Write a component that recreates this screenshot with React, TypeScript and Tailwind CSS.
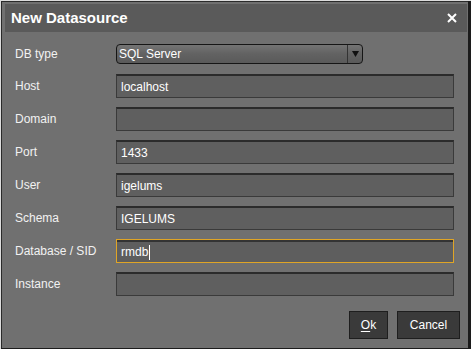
import React from "react";

const font = { fontFamily: '"Liberation Sans", Arial, sans-serif' };

function Field({ value, focused }: { value?: string; focused?: boolean }) {
  if (focused) {
    return (
      <div className="h-[24px] w-[338px] border border-[#e0a526] bg-[#5e5e5e]">
        <div className="flex h-full items-center border-t-2 border-[#333333] pl-[4px] text-[12px] text-white">
          <span>{value}</span>
          <span className="ml-[1px] inline-block h-[15px] w-[1px] bg-white" />
        </div>
      </div>
    );
  }
  return (
    <div className="flex h-[24px] w-[338px] items-center border border-t-2 border-[#3a3a3a] border-t-[#2b2b2b] bg-[#5f5f5f] pl-[4px] text-[12px] text-white">
      {value}
    </div>
  );
}

function Row({ label, children, first }: { label: string; children: React.ReactNode; first?: boolean }) {
  return (
    <div className={`flex items-center ${first ? "h-[20px]" : "h-[24px]"}`}>
      <div className="w-[101px] text-[12px] text-[#f2f2f2]">{label}</div>
      {children}
    </div>
  );
}

export default function App() {
  const rows: [string, string, boolean?][] = [
    ["Host", "localhost"],
    ["Domain", ""],
    ["Port", "1433"],
    ["User", "igelums"],
    ["Schema", "IGELUMS"],
    ["Database / SID", "rmdb", true],
    ["Instance", ""],
  ];
  return (
    <div style={font} className="h-[349px] w-[471px] border-l border-t border-[#dcdcdc] bg-[#1c1c1c]">
      <div className="h-[347px] w-[467px] border-l border-t border-[#2a2a2a] bg-[#707070] pl-[3px] pr-[1px] pt-[2px]">
        <div className="flex h-[28px] w-[462px] items-center justify-between bg-[#5a5a5a] pl-[6px] pr-[10px]">
          <span className="text-[15px] font-bold text-white">New Datasource</span>
          <svg width="10" height="10" viewBox="0 0 10 10">
            <path d="M1 1 L9 9 M9 1 L1 9" stroke="white" strokeWidth="2" />
          </svg>
        </div>
        <div className="pl-[10px] pt-[12px]">
          <Row label="DB type" first>
            <div className="flex h-[20px] w-[247px] items-center rounded-[4px] border border-[#161616] bg-gradient-to-b from-[#747474] via-[#626262] to-[#5a5a5a] text-[12px] text-white">
              <span className="flex-1 pl-[2px]">SQL Server</span>
              <div className="flex h-full w-[15px] items-center justify-center border-l border-[#333333]">
                <svg width="7" height="6" viewBox="0 0 7 6">
                  <path d="M0 0 H7 L3.5 6 Z" fill="#111" />
                </svg>
              </div>
            </div>
          </Row>
          <div className="mt-[10px] flex flex-col gap-[9px]">
            {rows.map(([l, v, f]) => (
              <Row key={l} label={l}>
                <Field value={v} focused={f} />
              </Row>
            ))}
          </div>
          <div className="mt-[15px] flex justify-end gap-[9px] pr-[7px]">
            <button className="flex h-[28px] w-[39px] items-center justify-center border border-[#1e1e1e] bg-[#3a3a3a] text-[12px] text-white">
              <span className="underline underline-offset-2">O</span>k
            </button>
            <button className="flex h-[28px] w-[63px] items-center justify-center border border-[#1e1e1e] bg-[#3a3a3a] text-[12px] text-white">
              Cancel
            </button>
          </div>
        </div>
      </div>
    </div>
  );
}
